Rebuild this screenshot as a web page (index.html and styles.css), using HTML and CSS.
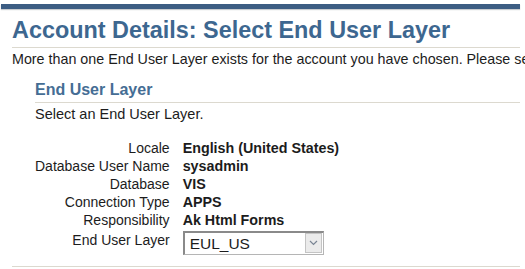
FILE: index.html
```html
<!DOCTYPE html>
<html lang="en">
<head>
    <meta charset="UTF-8">
    <title>Account Details: Select End User Layer</title>
    <link rel="stylesheet" href="styles.css">
</head>
<body>
    <div class="brand-bar"></div>

    <div class="page">
        <h1 class="page-title">Account Details: Select End User Layer</h1>
        <p class="intro">More than one End User Layer exists for the account you have chosen. Please select one to continue.</p>

        <div class="section">
            <h2 class="section-title">End User Layer</h2>
            <p class="hint">Select an End User Layer.</p>

            <div class="details">
                <span class="label">Locale</span>
                <span class="value">English (United States)</span>
                <span class="label">Database User Name</span>
                <span class="value">sysadmin</span>
                <span class="label">Database</span>
                <span class="value">VIS</span>
                <span class="label">Connection Type</span>
                <span class="value">APPS</span>
                <span class="label">Responsibility</span>
                <span class="value">Ak Html Forms</span>
                <span class="label label-select">End User Layer</span>
                <div class="select-box">
                    <span class="select-text">EUL_US</span>
                    <span class="select-arrow">
                        <svg width="9" height="6" viewBox="0 0 9 6"><path d="M1 1 L4.5 4.5 L8 1" fill="none" stroke="#7a8594" stroke-width="1.2"/></svg>
                    </span>
                </div>
            </div>
        </div>

        <div class="footer-rule"></div>
    </div>
</body>
</html>
```

FILE: styles.css
```css
body {
    margin: 0;
    background: #fff;
    color: #1c1c1c;
    font-family: "Liberation Sans", Arial, sans-serif;
    overflow: hidden;
}
.brand-bar {
    height: 5px;
    margin: 4px 5px 0 1px;
    background-color: #3c5d83;
    box-shadow: 0 1px 1px #c9ccd0;
}
.page {
    padding: 0 5px 0 12px;
}
.page-title {
    margin: 7px 0 0;
    padding-bottom: 3px;
    font-size: 23.4px;
    line-height: 28px;
    font-weight: bold;
    color: #3d6790;
    border-bottom: 1px solid #dcd9cf;
}
.intro {
    margin: 3px 0 0;
    font-size: 14.3px;
    line-height: 17px;
    white-space: nowrap;
}
.section {
    padding-left: 23px;
    margin-top: 13px;
}
.section-title {
    margin: 0;
    padding-bottom: 3px;
    font-size: 16px;
    line-height: 18px;
    font-weight: bold;
    color: #456d94;
    border-bottom: 1px solid #dcd9cf;
}
.hint {
    margin: 3px 0 0;
    font-size: 14.5px;
    line-height: 17px;
}
.details {
    display: grid;
    grid-template-columns: auto auto;
    column-gap: 13px;
    margin-top: 16px;
    font-size: 14px;
    line-height: 18px;
    justify-content: start;
}
.label {
    text-align: right;
    white-space: nowrap;
}
.label-select {
    padding-top: 2px;
}
.value {
    font-size: 14.3px;
    font-weight: bold;
    white-space: nowrap;
}
.select-box {
    display: flex;
    width: 141px;
    height: 24px;
    margin-top: 2px;
    border: 1px solid #b5b5b5;
    border-top: 2px solid #8a8a8a;
    border-left: 2px solid #8a8a8a;
    box-sizing: border-box;
}
.select-text {
    flex: 1;
    padding: 2px 0 0 5px;
    font-size: 15.5px;
    line-height: 18px;
}
.select-arrow {
    display: flex;
    align-items: center;
    justify-content: center;
    width: 15px;
    margin: 0 1px 1px;
    background: #ebebeb;
    border: 1px solid #c4c4c4;
}
.footer-rule {
    margin-top: 11px;
    border-top: 1px solid #dcd9cf;
}
```
